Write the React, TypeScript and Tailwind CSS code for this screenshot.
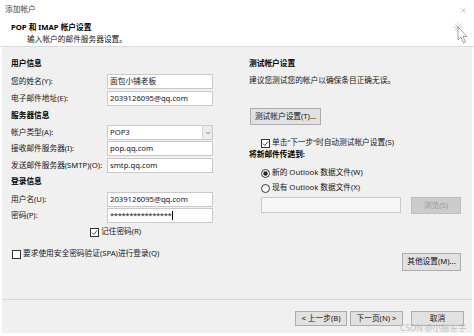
import { X } from 'lucide-react';

function Field({ label, children, className = '' }: { label: string; children: React.ReactNode; className?: string }) {
  return (
    <div className={`flex items-center h-[15px] ${className}`}>
      <div className="w-[96px] shrink-0">{label}</div>
      {children}
    </div>
  );
}

function TextBox({ value, className = '' }: { value?: string; className?: string }) {
  return (
    <div className={`h-[15px] w-[106px] bg-white border border-[#c9c9c9] flex items-center pl-[2px] ${className}`}>
      {value}
    </div>
  );
}

function Check({ checked }: { checked?: boolean }) {
  return (
    <svg width="9" height="9" viewBox="0 0 9 9" className="shrink-0">
      <rect x="0.5" y="0.5" width="8" height="8" fill="#fff" stroke="#333" />
      {checked && <path d="M2 4.6 L3.8 6.4 L7 2.6" fill="none" stroke="#333" strokeWidth="0.9" />}
    </svg>
  );
}

function Radio({ checked }: { checked?: boolean }) {
  return (
    <svg width="9" height="9" viewBox="0 0 9 9" className="shrink-0">
      <circle cx="4.5" cy="4.5" r="4" fill="#fff" stroke="#333" />
      {checked && <circle cx="4.5" cy="4.5" r="2.2" fill="#222" />}
    </svg>
  );
}

function Btn({ children, className = '' }: { children: React.ReactNode; className?: string }) {
  return (
    <div className={`flex items-center justify-center bg-[#e1e1e1] border border-[#adadad] ${className}`}>
      {children}
    </div>
  );
}

export default function App() {
  return (
    <div className="w-[474px] h-[336px] bg-white relative overflow-hidden font-['Noto_Sans','Noto_Sans_CJK_SC',sans-serif] text-[7.7px] leading-none text-[#141414]">

      {/* Header */}
      <div className="h-[47px] border-b border-[#d9d9d9] pt-[5px]">
        <div className="flex items-center justify-between h-[10px] pl-[5px] pr-[7px]">
          <span className="text-[#444]">添加帐户</span>
          <X size={7} strokeWidth={1.2} className="text-[#555]" />
        </div>
        <div className="h-[10px] mt-[8px] pl-[11px] flex items-center font-bold text-black">POP 和 IMAP 帐户设置</div>
        <div className="h-[10px] mt-[2px] pl-[27px] flex items-center">输入帐户的邮件服务器设置。</div>
      </div>

      {/* Busy cursor */}
      <svg width="20" height="24" viewBox="0 0 20 24" className="absolute left-[451px] top-[21px]">
        <g stroke="#c8c8c8" strokeWidth="0.8">
          <line x1="7" y1="1" x2="7" y2="11" />
          <line x1="2" y1="6" x2="12" y2="6" />
          <line x1="3.5" y1="2.5" x2="10.5" y2="9.5" />
          <line x1="10.5" y1="2.5" x2="3.5" y2="9.5" />
        </g>
        <path d="M7 6 L7 19 L10 16 L12.5 22 L14.5 21 L12 15.5 L16 15.5 Z" fill="#fff" stroke="#8a8a8a" strokeWidth="0.8" />
      </svg>

      {/* Panel */}
      <div className="mx-[2px] h-[286px] bg-[#f0f0f0] flex flex-col">
        <div className="h-[253px] flex border-b border-[#d9d9d9]">

          {/* Left column */}
          <div className="w-[230px] pl-[9px] pt-[9px] flex flex-col">
            <div className="h-[16px] flex items-center font-bold text-black">用户信息</div>
            <Field label="您的姓名(Y):" className="mt-[2px]"><TextBox value="面包小铺老板" /></Field>
            <Field label="电子邮件地址(E):" className="mt-[2px]"><TextBox value="2039126095@qq.com" /></Field>
            <div className="h-[16px] mt-[2px] flex items-center font-bold text-black">服务器信息</div>
            <Field label="帐户类型(A):" className="mt-[1px]">
              <div className="h-[15px] w-[106px] bg-white border border-[#c9c9c9] flex items-center">
                <span className="pl-[2px] flex-1">POP3</span>
                <div className="w-[10px] h-full bg-[#ececec] border-l border-[#d4d4d4] flex items-center justify-center">
                  <svg width="6" height="4" viewBox="0 0 6 4">
                    <path d="M0.8 0.8 L3 3 L5.2 0.8" fill="none" stroke="#777" strokeWidth="0.8" />
                  </svg>
                </div>
              </div>
            </Field>
            <Field label="接收邮件服务器(I):" className="mt-[1px]"><TextBox value="pop.qq.com" /></Field>
            <Field label="发送邮件服务器(SMTP)(O):" className="mt-[2px]"><TextBox value="smtp.qq.com" /></Field>
            <div className="h-[16px] mt-[1px] flex items-center font-bold text-black">登录信息</div>
            <Field label="用户名(U):" className="mt-[2px]"><TextBox value="2039126095@qq.com" /></Field>
            <Field label="密码(P):" className="mt-[1px]">
              <div className="h-[15px] w-[106px] bg-white border border-[#c9c9c9] flex items-center pl-[2px]">
                <span className="tracking-[-0.4px]">****************</span>
                <span className="w-px h-[9px] bg-black ml-[1px]" />
              </div>
            </Field>
            <div className="h-[14px] mt-[2px] pl-[79px] flex items-center gap-[2px]">
              <Check checked />
              <span>记住密码(R)</span>
            </div>
            <div className="h-[14px] mt-[8px] pl-[1px] flex items-center gap-[2px]">
              <Check />
              <span>要求使用安全密码验证(SPA)进行登录(Q)</span>
            </div>
          </div>

          {/* Right column */}
          <div className="w-[212px] ml-[17px] pt-[9px] flex flex-col">
            <div className="h-[16px] flex items-center font-bold text-black">测试帐户设置</div>
            <div className="h-[16px] mt-[1px] flex items-center">建议您测试您的帐户以确保条目正确无误。</div>
            <Btn className="h-[17px] w-[71px] ml-[1px] mt-[19px]">测试帐户设置(T)...</Btn>
            <div className="h-[12px] mt-[12px] pl-[12px] flex items-center gap-[2px]">
              <Check checked />
              <span>单击“下一步”时自动测试帐户设置(S)</span>
            </div>
            <div className="h-[10px] mt-[1px] flex items-center font-bold text-black">将新邮件传递到:</div>
            <div className="h-[12px] mt-[7px] pl-[12px] flex items-center gap-[2px]">
              <Radio checked />
              <span>新的 Outlook 数据文件(W)</span>
            </div>
            <div className="h-[12px] mt-[3px] pl-[12px] flex items-center gap-[2px]">
              <Radio />
              <span>现有 Outlook 数据文件(X)</span>
            </div>
            <div className="h-[16px] mt-[3px] pl-[12px] flex">
              <div className="w-[140px] h-full bg-[#f7f7f7] border border-[#c9c9c9]" />
              <div className="w-[50px] h-[17px] ml-[10px] bg-[#cccccc] border border-[#bfbfbf] text-[#9a9a9a] flex items-center justify-center">浏览(S)</div>
            </div>
            <Btn className="h-[18px] w-[59px] mt-[40px] ml-auto">其他设置(M)...</Btn>
          </div>
        </div>

        {/* Bottom buttons */}
        <div className="flex-1 flex justify-end items-start pt-[11px] pr-[8px]">
          <Btn className="h-[15px] w-[52px]">&lt; 上一步(B)</Btn>
          <Btn className="h-[15px] w-[53px] ml-[3px] border-[#0078d7]">下一页(N) &gt;</Btn>
          <Btn className="h-[15px] w-[53px] ml-[8px]">取消</Btn>
        </div>
      </div>

      {/* Watermark */}
      <div className="absolute left-[400px] top-[324px] text-[8.5px] text-[#bdbdbd] opacity-90">CSDN @小腊东子</div>
    </div>
  );
}
